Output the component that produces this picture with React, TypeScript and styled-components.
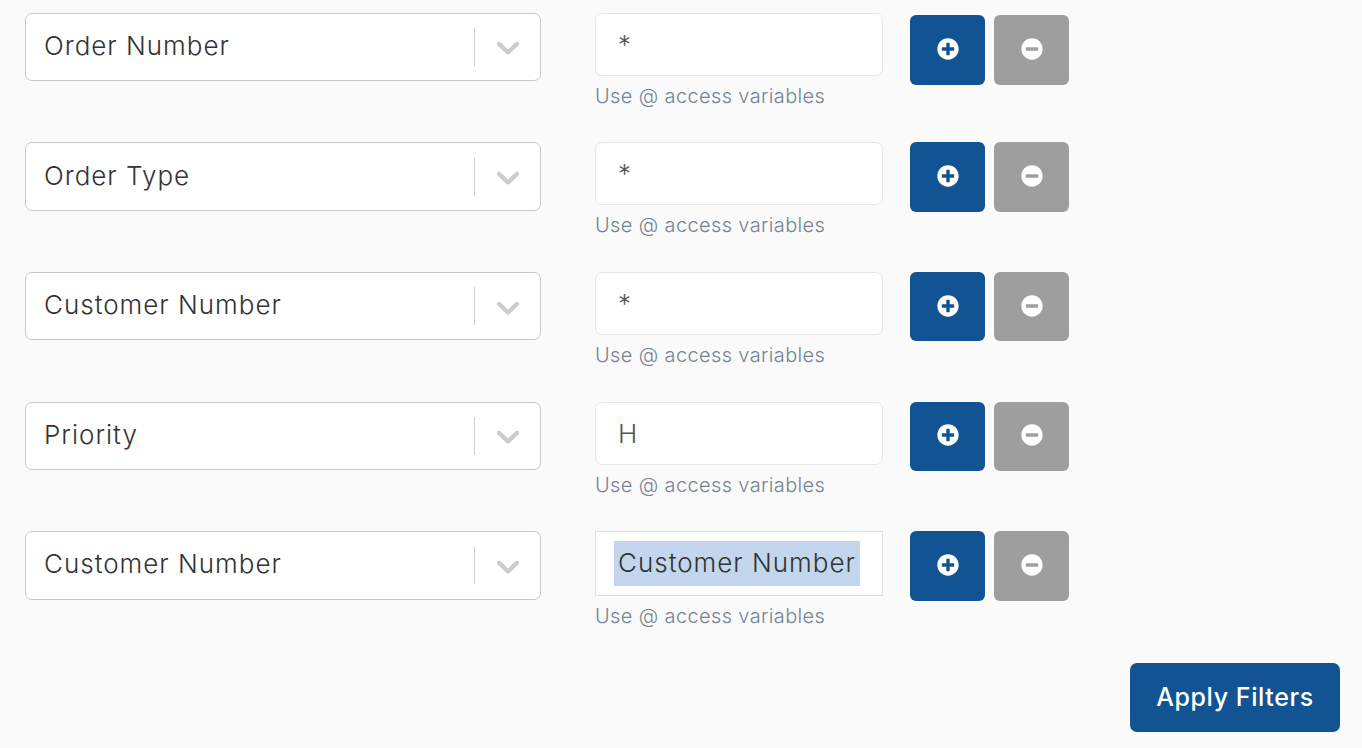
import React from "react";
import styled, { createGlobalStyle } from "styled-components";
import { FaMinusCircle, FaPlusCircle } from "react-icons/fa";

const GlobalStyle = createGlobalStyle`
  html, body {
    margin: 0;
    padding: 0;
    height: 100%;
    background: #fafafa;
    font-family: "Inter", "Liberation Sans", sans-serif;
    overflow: hidden;
  }
`;

type FilterRow = {
  field: string;
  value: string;
  focused?: boolean;
};

const rows: FilterRow[] = [
  { field: "Order Number", value: "*" },
  { field: "Order Type", value: "*" },
  { field: "Customer Number", value: "*" },
  { field: "Priority", value: "H" },
  { field: "Customer Number", value: "Customer Number", focused: true },
];

function Chevron() {
  return (
    <ChevronIcon viewBox="0 0 20 20" aria-hidden="true">
      <path d="M4.516 7.548c0.436-0.446 1.043-0.481 1.576 0l3.908 3.747 3.908-3.747c0.533-0.481 1.141-0.446 1.574 0 0.436 0.445 0.408 1.197 0 1.615-0.406 0.418-4.695 4.502-4.695 4.502-0.217 0.223-0.502 0.335-0.787 0.335s-0.57-0.112-0.789-0.335c0 0-4.287-4.084-4.695-4.502s-0.436-1.17 0-1.615z" />
    </ChevronIcon>
  );
}

export default function App() {
  return (
    <Page>
      <GlobalStyle />
      {rows.map((row, index) => (
        <Row key={index}>
          <Select>
            <SelectLabel>{row.field}</SelectLabel>
            <SelectDivider />
            <Chevron />
          </Select>
          <ValueColumn>
            {row.focused ? (
              <FocusedField>
                <Selected>{row.value}</Selected>
              </FocusedField>
            ) : (
              <Field readOnly value={row.value} />
            )}
            <Hint>Use @ access variables</Hint>
          </ValueColumn>
          <Actions $nudged={index === 0}>
            <IconButton $variant="add" aria-label="Add filter">
              <FaPlusCircle />
            </IconButton>
            <IconButton $variant="remove" aria-label="Remove filter">
              <FaMinusCircle />
            </IconButton>
          </Actions>
        </Row>
      ))}
      <Footer>
        <ApplyButton>Apply Filters</ApplyButton>
      </Footer>
    </Page>
  );
}

const Page = styled.div`
  box-sizing: border-box;
  width: 1362px;
  height: 748px;
  padding: 12.75px 22px 0 25px;
  background: #fafafa;
`;

const Row = styled.div`
  display: flex;
  align-items: flex-start;
  height: 129.6px;
`;

const Select = styled.div`
  box-sizing: border-box;
  display: flex;
  align-items: center;
  width: 516px;
  height: 68.45px;
  padding: 0 12px 0 18px;
  background: #fff;
  border: 1px solid #c8c8c8;
  border-radius: 7px;
`;

const SelectLabel = styled.span`
  flex: 1;
  padding-bottom: 3px;
  font-size: 26px;
  font-weight: 350;
  letter-spacing: 1px;
  color: #333;
`;

const SelectDivider = styled.span`
  width: 1px;
  height: 38px;
  background: #ccc;
`;

const ChevronIcon = styled.svg`
  width: 38px;
  height: 38px;
  margin: 1px 1px 0 14px;
  fill: #ccc;
`;

const ValueColumn = styled.div`
  display: flex;
  flex-direction: column;
  width: 288px;
  margin-left: 54px;
`;

const Field = styled.input`
  box-sizing: border-box;
  width: 100%;
  height: 63px;
  padding: 0 22px;
  background: #fff;
  border: 1px solid #e6e6e6;
  border-radius: 7px;
  outline: none;
  font-family: inherit;
  font-size: 26px;
  font-weight: 300;
  color: #555;
`;

const FocusedField = styled.div`
  box-sizing: border-box;
  display: flex;
  align-items: center;
  width: 100%;
  height: 65px;
  padding-left: 18px;
  background: #fff;
  border: 1px solid #e0e0e0;
`;

const Selected = styled.span`
  height: 45px;
  padding: 0 4px;
  line-height: 44px;
  background: #c2d6ee;
  font-size: 26px;
  font-weight: 350;
  letter-spacing: 1px;
  color: #333;
`;

const Hint = styled.span`
  margin-top: 8px;
  font-size: 20px;
  font-weight: 350;
  letter-spacing: 0.37px;
  line-height: 25px;
  color: #748494;
`;

const Actions = styled.div<{ $nudged?: boolean }>`
  display: flex;
  gap: 9px;
  margin: ${(props) => (props.$nudged ? "2.25px" : "0")} 0 0 27px;
`;

const IconButton = styled.button<{ $variant: "add" | "remove" }>`
  display: flex;
  align-items: center;
  justify-content: center;
  width: 75px;
  height: 69.5px;
  padding: 0 0 2px;
  border: 0;
  border-radius: 6px;
  background: ${(props) => (props.$variant === "add" ? "#125493" : "#9e9e9e")};
  color: #fff;
  font-size: 22px;
`;

const Footer = styled.div`
  display: flex;
  justify-content: flex-end;
  margin-top: 2.25px;
`;

const ApplyButton = styled.button`
  width: 210px;
  height: 69px;
  border: 0;
  border-radius: 7px;
  background: #125493;
  color: #fff;
  font-family: inherit;
  font-size: 25px;
  font-weight: 500;
  letter-spacing: 0.6px;
`;
